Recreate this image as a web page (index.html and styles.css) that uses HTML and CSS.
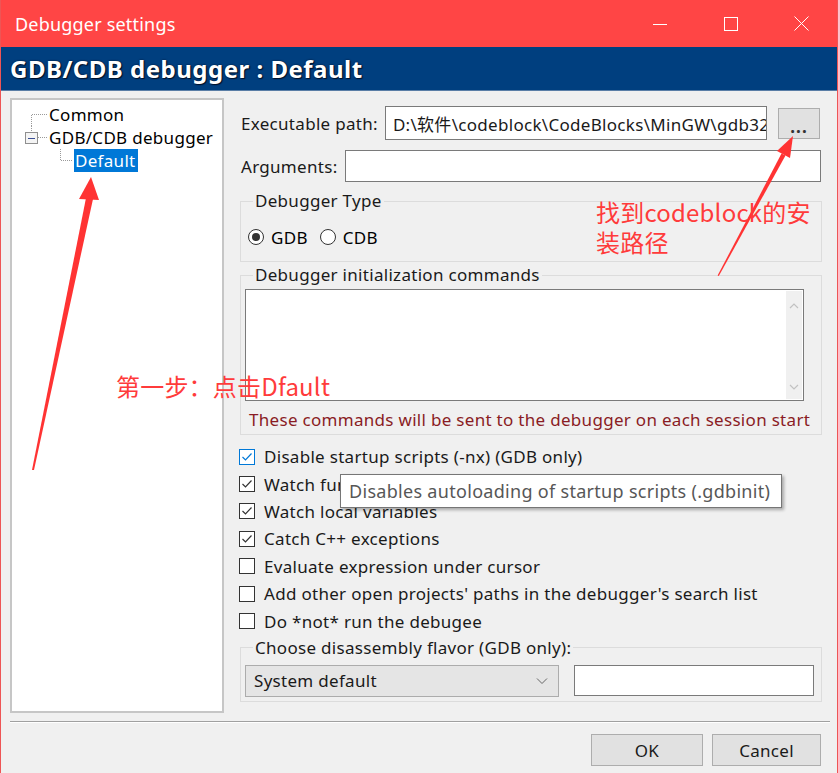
FILE: index.html
```html
<!DOCTYPE html>
<html>
<head>
<meta charset="utf-8">
<link rel="stylesheet" href="styles.css">
</head>
<body>
<div class="window">
  <div class="titlebar">
    <span class="title">Debugger settings</span>
    <div class="controls">
      <span class="ctl"><svg width="14" height="14"><path d="M0 7.5H14" stroke="#fff"/></svg></span>
      <span class="ctl"><svg width="14" height="14"><rect x="0.5" y="0.5" width="13" height="13" fill="none" stroke="#fff"/></svg></span>
      <span class="ctl"><svg width="15" height="15"><path d="M0.5 0.5L14.5 14.5M14.5 0.5L0.5 14.5" stroke="#fff"/></svg></span>
    </div>
  </div>
  <div class="header">GDB/CDB debugger : Default</div>
  <div class="main">
    <div class="tree">
      <div class="trow">
        <svg width="37" height="23" shape-rendering="crispEdges"><path d="M19.5 11.5H35M19.5 11.5V23" stroke="#9a9a9a" stroke-dasharray="1 1" fill="none"/></svg>
        <span class="tlabel">Common</span>
      </div>
      <div class="trow">
        <svg width="37" height="23" shape-rendering="crispEdges"><path d="M19.5 0V6M26 11.5H35" stroke="#9a9a9a" stroke-dasharray="1 1" fill="none"/><rect x="13.5" y="6.5" width="12" height="11" fill="#f4f4f4" stroke="#8f8f8f"/><path d="M16 12.5H23" stroke="#3b4f95"/></svg>
        <span class="tlabel">GDB/CDB debugger</span>
      </div>
      <div class="trow">
        <svg width="62" height="23" shape-rendering="crispEdges"><path d="M48.5 0V11.5H61" stroke="#9a9a9a" stroke-dasharray="1 1" fill="none"/></svg>
        <span class="tlabel selected">Default</span>
      </div>
    </div>
    <div class="panel">
      <div class="row row-exe">
        <span class="lbl">Executable path:</span>
        <div class="input exe-input">D:\软件\codeblock\CodeBlocks\MinGW\gdb32.exe</div>
        <div class="browse">...</div>
      </div>
      <div class="row row-args">
        <span class="lbl">Arguments:</span>
        <div class="input args-input"></div>
      </div>
      <fieldset class="group g1">
        <legend class="glegend">Debugger Type</legend>
        <div class="radios">
          <span class="ropt"><span class="radio on"></span>GDB</span>
          <span class="ropt"><span class="radio"></span>CDB</span>
        </div>
      </fieldset>
      <fieldset class="group g2">
        <legend class="glegend">Debugger initialization commands</legend>
        <div class="input textarea">
          <div class="ta-body"></div>
          <div class="scrollbar">
            <svg width="16" height="12"><path d="M4 8L8 4L12 8" stroke="#c2c2c2" fill="none" stroke-width="1.2"/></svg>
            <svg width="16" height="12"><path d="M4 4L8 8L12 4" stroke="#c2c2c2" fill="none" stroke-width="1.2"/></svg>
          </div>
        </div>
        <div class="hint">These commands will be sent to the debugger on each session start</div>
      </fieldset>
      <div class="checks">
        <div class="chk"><span class="cb on hover"><svg width="14" height="14"><path d="M2.5 7L5.5 10L11.5 3.5" stroke="#0078d7" fill="none" stroke-width="1.2"/></svg></span>Disable startup scripts (-nx) (GDB only)</div>
        <div class="chk"><span class="cb on"><svg width="14" height="14"><path d="M2.5 7L5.5 10L11.5 3.5" stroke="#333" fill="none" stroke-width="1.2"/></svg></span>Watch function arguments</div>
        <div class="chk"><span class="cb on"><svg width="14" height="14"><path d="M2.5 7L5.5 10L11.5 3.5" stroke="#333" fill="none" stroke-width="1.2"/></svg></span>Watch local variables</div>
        <div class="chk"><span class="cb on"><svg width="14" height="14"><path d="M2.5 7L5.5 10L11.5 3.5" stroke="#333" fill="none" stroke-width="1.2"/></svg></span>Catch C++ exceptions</div>
        <div class="chk"><span class="cb"></span>Evaluate expression under cursor</div>
        <div class="chk"><span class="cb"></span>Add other open projects' paths in the debugger's search list</div>
        <div class="chk"><span class="cb"></span>Do *not* run the debugee</div>
      </div>
      <fieldset class="group g3">
        <legend class="glegend">Choose disassembly flavor (GDB only):</legend>
        <div class="flavor">
          <div class="select">System default<svg width="12" height="8"><path d="M1 1.5L6 6.5L11 1.5" stroke="#666" fill="none"/></svg></div>
          <div class="input flavor-input"></div>
        </div>
      </fieldset>
    </div>
  </div>
  <div class="sep"></div>
  <div class="footer">
    <div class="btn ok">OK</div>
    <div class="btn cancel">Cancel</div>
  </div>

  <div class="tooltip">Disables autoloading of startup scripts (.gdbinit)</div>
  <svg class="annot" width="838" height="773">
    <polygon points="91,177 79,199 99,200" fill="#ff3333"/>
    <polygon points="86,198 93,199 34,470 32,470" fill="#ff3333"/>
    <polygon points="793,136 777,151 790,158" fill="#ff3333"/>
    <polygon points="781.5,153.5 785.5,155.5 718.8,276 717.6,275.6" fill="#ff3333"/>
  </svg>
  <div class="note note1">第一步：点击Dfault</div>
  <div class="note note2">找到codeblock的安<br>装路径</div>
</div>
</body>
</html>
```

FILE: styles.css
```css
body {
  margin: 0;
  background: #f0f0f0;
  font-family: "Noto Sans", "Noto Sans CJK SC", sans-serif;
  font-size: 17px;
  letter-spacing: 0.3px;
  color: #000;
}

.window {
  position: relative;
  width: 838px;
  height: 773px;
  box-sizing: border-box;
  border-left: 1px solid #ee5555;
  border-right: 1px solid #ee5555;
  background: #f0f0f0;
  overflow: hidden;
}

.titlebar {
  height: 47px;
  background: #ff4545;
  display: flex;
  align-items: center;
  color: #fff;
}

.title {
  flex: 1;
  padding-left: 14px;
  font-size: 18px;
  letter-spacing: 0.2px;
}

.controls {
  display: flex;
  height: 100%;
}

.ctl {
  width: 71px;
  display: flex;
  align-items: center;
  justify-content: center;
}

.header {
  height: 44px;
  box-sizing: border-box;
  background: #003f7f;
  border-bottom: 1px solid #5a7ea6;
  color: #fff;
  font-weight: 700;
  font-size: 24px;
  letter-spacing: 0.5px;
  padding-left: 9px;
  display: flex;
  align-items: center;
  text-shadow: 0 0 2px #00112a, 1px 1px 1px #00112a;
}

.main {
  display: flex;
  gap: 15px;
  padding: 7px 16px 0 9px;
}

.tree {
  width: 214px;
  height: 615px;
  flex: none;
  box-sizing: border-box;
  background: #fff;
  border: 2px solid #c6c6c6;
  padding-top: 3px;
}

.trow {
  display: flex;
  align-items: center;
  height: 23px;
}

.trow svg {
  flex: none;
  display: block;
}

.tlabel {
  line-height: 23px;
  white-space: nowrap;
}

.tlabel.selected {
  background: #0078d7;
  color: #fff;
  padding: 0 2px 0 1px;
}

.panel {
  flex: 1;
  min-width: 0;
  padding-top: 8px;
}

.row {
  display: flex;
  align-items: center;
}

.lbl {
  padding-left: 2px;
  margin-right: 7px;
  white-space: nowrap;
  color: #1a1a1a;
}

.input {
  background: #fff;
  border: 1px solid #7a7a7a;
  box-sizing: border-box;
}

.row-exe {
  height: 34px;
}

.exe-input {
  flex: 1;
  min-width: 0;
  height: 34px;
  padding-left: 7px;
  overflow: hidden;
  white-space: nowrap;
  display: flex;
  align-items: center;
  color: #1a1a1a;
}

.browse {
  width: 42px;
  height: 31px;
  flex: none;
  box-sizing: border-box;
  margin-left: 11px;
  margin-right: 1px;
  background: #e1e1e1;
  border: 1px solid #adadad;
  display: flex;
  align-items: flex-end;
  justify-content: center;
  font-weight: 700;
  line-height: 22px;
  color: #333;
  letter-spacing: 1px;
}

.row-args {
  height: 32px;
  margin-top: 10px;
}

.args-input {
  flex: 1;
  height: 32px;
}

.group {
  margin: 0 -1px 0 1px;
  padding: 0;
  border: 1px solid #dcdcdc;
  min-width: 0;
}

.glegend {
  margin-left: 12px;
  padding: 0 2px;
  line-height: 20px;
  color: #1a1a1a;
}

.g1 {
  margin-top: 9px;
}

.radios {
  display: flex;
  align-items: center;
  height: 20px;
  padding: 16px 0 14px 7px;
}

.ropt {
  display: flex;
  align-items: center;
  margin-right: 12px;
}

.radio {
  width: 16px;
  height: 16px;
  box-sizing: border-box;
  border: 1px solid #333;
  border-radius: 50%;
  background: #fff;
  margin-right: 7px;
  display: flex;
  align-items: center;
  justify-content: center;
}

.radio.on::after {
  content: "";
  width: 8px;
  height: 8px;
  border-radius: 50%;
  background: #333;
}

.g2 {
  margin-top: 3px;
}

.textarea {
  margin: 4px 0 0 4px;
  width: 559px;
  height: 112px;
  display: flex;
  padding: 1px;
}

.ta-body {
  flex: 1;
}

.scrollbar {
  width: 16px;
  background: #f0f0f0;
  display: flex;
  flex-direction: column;
  justify-content: space-between;
  padding: 9px 0 6px;
}

.scrollbar svg {
  display: block;
}

.hint {
  color: #8a1c24;
  padding: 9px 0 4px 8px;
  line-height: 20px;
  white-space: nowrap;
}

.checks {
  margin-top: 8px;
}

.chk {
  display: flex;
  align-items: center;
  height: 27.4px;
  color: #1a1a1a;
  white-space: nowrap;
}

.cb {
  width: 16px;
  height: 16px;
  flex: none;
  box-sizing: border-box;
  border: 1px solid #333;
  background: #fff;
  margin-right: 9px;
  display: flex;
  align-items: center;
  justify-content: center;
}

.cb svg {
  display: block;
}

.cb.hover {
  border-color: #0078d7;
}

.g3 {
  margin-top: 3px;
}

.flavor {
  display: flex;
  align-items: center;
  gap: 15px;
  padding: 7px 0 4px 4px;
}

.select {
  width: 314px;
  height: 32px;
  box-sizing: border-box;
  background: #e5e5e5;
  border: 1px solid #acacac;
  display: flex;
  align-items: center;
  justify-content: space-between;
  padding: 0 10px 0 8px;
  color: #1a1a1a;
}

.flavor-input {
  width: 240px;
  height: 31px;
}

.sep {
  margin: 8px 7px 0 9px;
  border-top: 1px solid #a0a0a0;
  border-bottom: 1px solid #fff;
}

.footer {
  display: flex;
  justify-content: flex-end;
  gap: 9px;
  padding: 11px 16px 0 0;
}

.btn {
  height: 32px;
  box-sizing: border-box;
  background: #e1e1e1;
  border: 1px solid #adadad;
  display: flex;
  align-items: center;
  justify-content: center;
  color: #1a1a1a;
}

.btn.ok {
  width: 112px;
}

.btn.cancel {
  width: 109px;
}

.tooltip {
  position: absolute;
  left: 339px;
  top: 474px;
  width: 442px;
  height: 34px;
  box-sizing: border-box;
  background: #fff;
  border: 1px solid #767676;
  color: #575757;
  font-size: 18px;
  letter-spacing: 0.3px;
  padding-left: 8px;
  display: flex;
  align-items: center;
  white-space: nowrap;
  box-shadow: 2px 2px 3px rgba(0, 0, 0, 0.3);
}

.annot {
  position: absolute;
  left: -1px;
  top: 0;
  pointer-events: none;
}

.note {
  position: absolute;
  font-family: "Noto Sans CJK SC", sans-serif;
  font-size: 24px;
  letter-spacing: 0.2px;
  color: #ff3b3b;
  line-height: 30px;
  white-space: nowrap;
}

.note1 {
  left: 115px;
  top: 371px;
}

.note2 {
  left: 595px;
  top: 197px;
}
```
